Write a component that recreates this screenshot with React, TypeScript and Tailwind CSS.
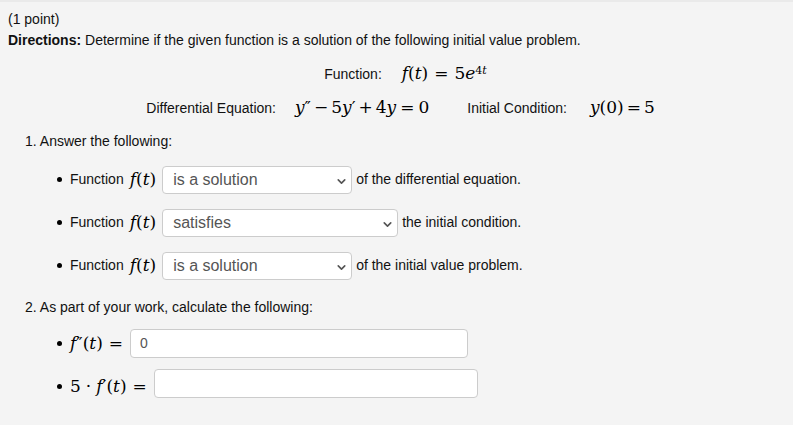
import { ChevronDown } from "lucide-react";

const math = "font-['DejaVu_Serif',serif] text-[17px] text-black";

function M({ children }: { children: React.ReactNode }) {
  return <span className={math}>{children}</span>;
}

function I({ children }: { children: React.ReactNode }) {
  return <i>{children}</i>;
}

function Eq({ gap = "mx-[6px]" }: { gap?: string }) {
  return <span className={gap}>=</span>;
}

function Select({ value, width }: { value: string; width: string }) {
  return (
    <span
      className={`relative inline-flex h-[28px] items-center rounded-[4px] border border-[#cccccc] bg-white pl-[10px] text-[16px] text-[#555555] ${width}`}
    >
      {value}
      <ChevronDown size={13} strokeWidth={3} className="absolute right-[3px] top-[8px] text-[#555555]" />
    </span>
  );
}

function Input({ value, width }: { value?: string; width: string }) {
  return (
    <span
      className={`inline-flex h-[29px] items-center rounded-[4px] border border-[#cccccc] bg-white pl-[9px] text-[14px] text-[#555555] ${width}`}
    >
      {value}
    </span>
  );
}

function Bullet({ children }: { children: React.ReactNode }) {
  return (
    <li className="flex h-[43px] items-center">
      <span className="mr-[8px] ml-[-1px] inline-block h-[5px] w-[5px] rounded-full bg-black" />
      {children}
    </li>
  );
}

function FRow({ value, width, tail }: { value: string; width: string; tail: string }) {
  return (
    <Bullet>
      Function
      <span className="ml-[6px]">
        <M>
          <I>f</I>(<I>t</I>)
        </M>
      </span>
      <span className="ml-[6px] mr-[4px]">
        <Select value={value} width={width} />
      </span>
      {tail}
    </Bullet>
  );
}

export default function App() {
  return (
    <div className="h-[425px] w-[793px] overflow-hidden border-t-2 border-[#eaeaea] bg-[#f4f4f4] pl-2 pt-[7px] font-['Liberation_Sans',Arial,sans-serif] text-[14px] text-[#111]">
      <p className="leading-[20px]">(1 point)</p>
      <p className="leading-[22px]">
        <b>Directions:</b> Determine if the given function is a solution of the following initial value problem.
      </p>

      <div className="mt-[11px] flex h-[24px] items-center justify-center pl-[10px]">
        <span>Function:</span>
        <span className="ml-[20px]">
          <M>
            <I>f</I>(<I>t</I>)<Eq />5<I>e</I>
            <sup className="text-[11px]">
              4<I>t</I>
            </sup>
          </M>
        </span>
      </div>

      <div className="mt-[10px] flex h-[24px] items-center justify-center">
        <span>Differential Equation:</span>
        <span className="ml-[19px]">
          <M>
            <I>y</I>″<span className="mx-[3px]">−</span>5<I>y</I>′<span className="mx-[3px]">+</span>4<I>y</I>
            <Eq gap="mx-[4px]" />0
          </M>
        </span>
        <span className="ml-[38px]">Initial Condition:</span>
        <span className="ml-[23px]">
          <M>
            <I>y</I>(0)<Eq gap="mx-[3px]" />5
          </M>
        </span>
      </div>

      <p className="mt-[11px] pl-[17px] leading-[20px]">1. Answer the following:</p>
      <ul className="mt-[7px] pl-[50px]">
        <FRow value="is a solution" width="w-[190px]" tail="of the differential equation." />
        <FRow value="satisfies" width="w-[236px]" tail="the initial condition." />
        <FRow value="is a solution" width="w-[190px]" tail="of the initial value problem." />
      </ul>

      <p className="mt-[10px] pl-[17px] leading-[20px]">2. As part of your work, calculate the following:</p>
      <ul className="mt-[5px] pl-[50px]">
        <Bullet>
          <M>
            <I>f</I>″(<I>t</I>)<Eq />
          </M>
          <span className="ml-[1px]">
            <Input value="0" width="w-[338px]" />
          </span>
        </Bullet>
        <Bullet>
          <M>
            5<span className="mx-[5px]">·</span><I>f</I>′(<I>t</I>)<Eq />
          </M>
          <span className="ml-[1px]">
            <Input width="w-[324px]" />
          </span>
        </Bullet>
      </ul>
    </div>
  );
}
